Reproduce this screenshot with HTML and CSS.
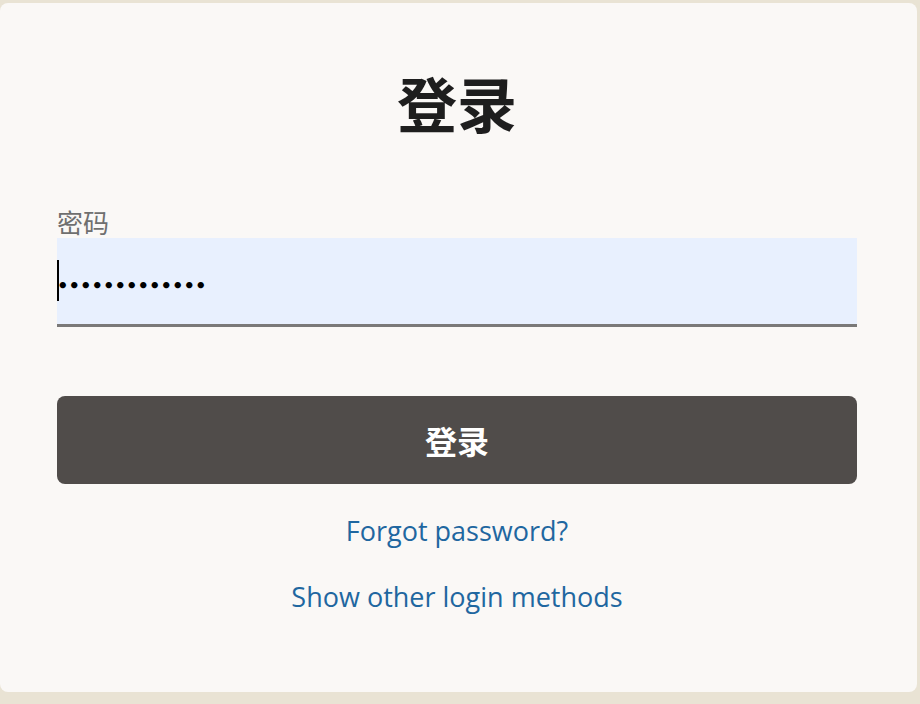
FILE: index.html
```html
<!DOCTYPE html>
<html lang="zh">
<head>
<meta charset="utf-8">
<title>登录</title>
<link rel="stylesheet" href="styles.css">
</head>
<body>
<div class="card">
  <h1 class="title">登录</h1>
  <div class="field">
    <label class="label" for="pw">密码</label>
    <div class="input">
      <span class="caret"></span>
      <span class="dots">•••••••••••••</span>
    </div>
  </div>
  <button class="btn" type="button">登录</button>
  <div class="links">
    <a class="link" href="#">Forgot password?</a>
    <a class="link" href="#">Show other login methods</a>
  </div>
</div>
</body>
</html>
```

FILE: styles.css
```css
html, body {
  margin: 0;
  padding: 0;
  background: #e9e3d4;
  width: 920px;
  height: 704px;
  overflow: hidden;
}
body {
  padding-top: 3px;
  box-sizing: border-box;
  font-family: "Noto Sans", "Noto Sans CJK SC", sans-serif;
}
.card {
  width: 917px;
  height: 689px;
  box-sizing: border-box;
  background: #faf8f6;
  border-radius: 8px;
  padding: 0 60px 0 57px;
  display: flex;
  flex-direction: column;
}
.title {
  margin: 64px 0 0;
  height: 70px;
  line-height: 70px;
  text-align: center;
  font-size: 60px;
  font-weight: 700;
  color: #1e1e1e;
  font-family: "Noto Sans CJK SC", sans-serif;
}
.field {
  margin-top: 69px;
  display: flex;
  flex-direction: column;
}
.label {
  font-family: "Noto Sans CJK SC", sans-serif;
  font-size: 26px;
  line-height: 32px;
  color: #6f6f6f;
}
.input {
  height: 86px;
  background: #e8f0fe;
  border-bottom: 3px solid #7a7978;
  display: flex;
  align-items: center;
  position: relative;
}
.caret {
  position: absolute;
  left: 0;
  top: 22px;
  width: 2px;
  height: 41px;
  background: #000;
}
.dots {
  font-family: "DejaVu Sans", sans-serif;
  font-size: 18px;
  letter-spacing: 0px;
  color: #000;
  margin-top: 8px;
  font-weight: 700;
}
.btn {
  margin-top: 69px;
  height: 88px;
  border: none;
  border-radius: 8px;
  background: #504c4a;
  color: #fff;
  font-family: "Noto Sans CJK SC", sans-serif;
  font-size: 32px;
  font-weight: 700;
  padding: 0;
}
.links {
  display: flex;
  flex-direction: column;
  align-items: center;
  margin-top: 29px;
  gap: 30px;
}
.link {
  font-family: "Open Sans", sans-serif;
  font-size: 27px;
  line-height: 36px;
  color: #1f67a0;
  text-decoration: none;
}
```
